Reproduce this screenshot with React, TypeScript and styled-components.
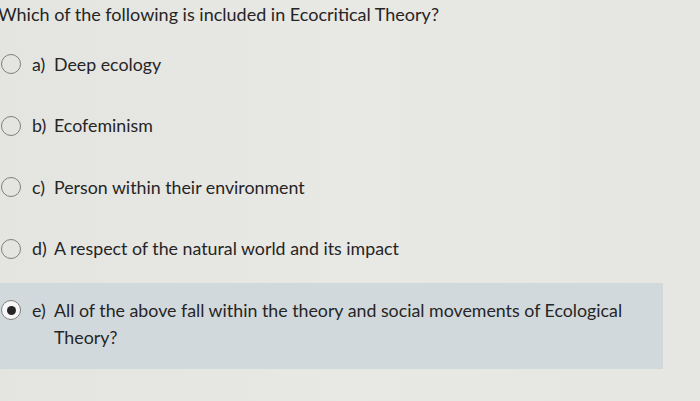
import React from "react";
import styled, { createGlobalStyle } from "styled-components";

const Global = createGlobalStyle`
  html, body { margin: 0; padding: 0; }
  body {
    width: 700px; height: 401px; overflow: hidden;
    background: #e7e7e4;
    font-family: Lato, "Open Sans", sans-serif;
    color: #252525;
  }
`;

const Page = styled.div`
  width: 700px;
  height: 401px;
  display: flex;
  flex-direction: column;
  background: linear-gradient(90deg, #e4e4e1 0%, #e8e8e5 50%, #e6e6e3 100%);
`;

const Question = styled.div`
  font-size: 18px;
  line-height: 22px;
  padding: 3px 0 0 0;
  margin-left: -2px;
  white-space: nowrap;
`;

const List = styled.div`
  display: flex;
  flex-direction: column;
  margin-top: 25.5px;
`;

const Option = styled.div<{ $selected?: boolean }>`
  display: flex;
  align-items: flex-start;
  width: ${(p) => (p.$selected ? "663px" : "auto")};
  background: ${(p) => (p.$selected ? "#d2d9dc" : "transparent")};
  padding: ${(p) => (p.$selected ? "13.5px 0 18.5px 0" : "0")};
  margin-bottom: ${(p) => (p.$selected ? "0" : "34.5px")};
  margin-top: ${(p) => (p.$selected ? "-13.5px" : "0")};
`;

const Radio = styled.span<{ $checked?: boolean }>`
  flex: none;
  box-sizing: border-box;
  width: 20px;
  height: 20px;
  border-radius: 50%;
  border: 1.5px solid #7f7f7f;
  background: ${(p) => (p.$checked ? "#f7f7f7" : "transparent")};
  margin: 3.5px 0 0 1px;
  display: flex;
  align-items: center;
  justify-content: center;
  &::after {
    content: "";
    display: ${(p) => (p.$checked ? "block" : "none")};
    width: 9px;
    height: 9px;
    border-radius: 50%;
    background: #262626;
  }
`;

const Letter = styled.span`
  flex: none;
  width: 22px;
  margin-left: 11px;
  font-size: 17.8px;
  line-height: 27px;
`;

const Text = styled.span`
  font-size: 17.8px;
  line-height: 27px;
  max-width: 600px;
`;

const options = [
  { l: "a)", t: "Deep ecology" },
  { l: "b)", t: "Ecofeminism" },
  { l: "c)", t: "Person within their environment" },
  { l: "d)", t: "A respect of the natural world and its impact" },
  {
    l: "e)",
    t: "All of the above fall within the theory and social movements of Ecological Theory?",
    s: true,
  },
];

export default function App() {
  return (
    <>
      <Global />
      <Page>
        <Question>Which of the following is included in Ecocritical Theory?</Question>
        <List>
          {options.map((o) => (
            <Option key={o.l} $selected={o.s}>
              <Radio $checked={o.s} />
              <Letter>{o.l}</Letter>
              <Text>{o.t}</Text>
            </Option>
          ))}
        </List>
      </Page>
    </>
  );
}
